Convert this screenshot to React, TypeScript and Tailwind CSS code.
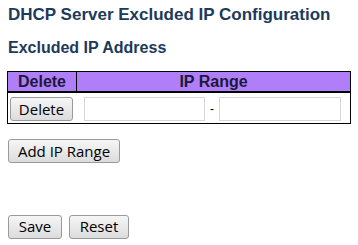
export default function App() {
  const btn =
    "h-[24px] rounded-[3px] border border-[#9a9a9a] bg-gradient-to-b from-[#f6f6f6] to-[#dcdcdc] px-0 text-[15px] leading-none text-black";
  const bf = { fontFamily: '"Open Sans", "DejaVu Sans", sans-serif' };
  const inp = "h-[24px] border border-[#d6d6d6] bg-white";
  return (
    <div
      className="h-[245px] w-[358px] bg-white pl-[8px] pt-[4px]"
      style={{ fontFamily: '"Liberation Sans", Arial, sans-serif' }}
    >
      <h1 className="text-[17px] font-bold leading-[22px] text-[#1c3a5a]">
        DHCP Server Excluded IP Configuration
      </h1>
      <h2 className="mt-[12px] text-[16px] font-bold leading-[20px] text-[#1c3a5a]">
        Excluded IP Address
      </h2>
      <div className="-ml-px mt-[13px] w-[344px] border border-black">
        <div className="flex h-[21px] border-b-2 border-black bg-[#b07ef8] text-[16px] font-bold leading-[19px] text-[#1a1a3a]">
          <div className="w-[69px] border-r border-black text-center">Delete</div>
          <div className="flex-1 text-center">IP Range</div>
        </div>
        <div className="flex items-center pb-[2px] pl-[2px] pt-[4px]">
          <button className={btn + " w-[63px]"} style={bf}>
            Delete
          </button>
          <div className={inp + " ml-[11px] w-[121px]"} />
          <span className="mx-[5px] text-[12px] text-black">-</span>
          <div className={inp + " w-[122px]"} />
        </div>
      </div>
      <div className="mt-[15px]">
        <button className={btn + " w-[112px]"} style={bf}>
          Add IP Range
        </button>
      </div>
      <div className="mt-[51px] flex gap-[7px]">
        <button className={btn + " w-[54px]"} style={bf}>
          Save
        </button>
        <button className={btn + " w-[60px]"} style={bf}>
          Reset
        </button>
      </div>
    </div>
  );
}
